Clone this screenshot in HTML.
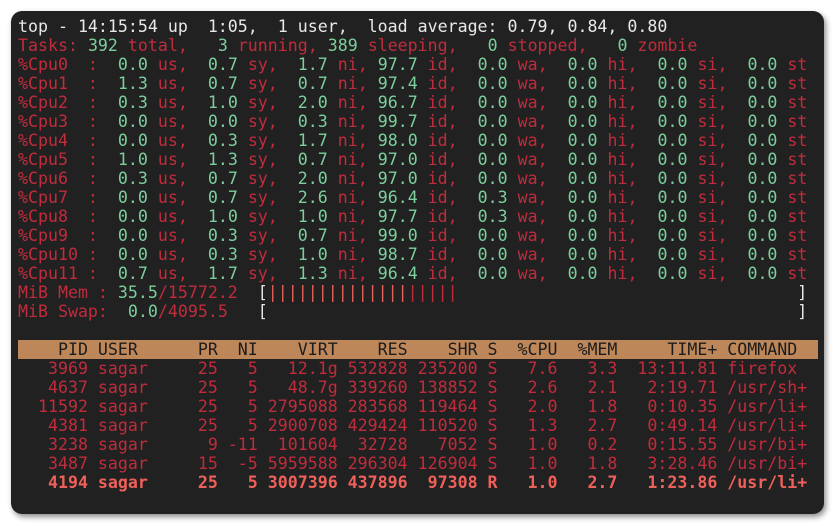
<!DOCTYPE html>
<html><head><meta charset="utf-8"><style>
html,body{margin:0;padding:0;background:#fff;width:837px;height:527px;overflow:hidden}
.win{position:absolute;left:11px;top:11px;width:813px;height:503px;background:#212121;border-radius:11px;box-shadow:2px 3px 6px rgba(0,0,0,.45)}
pre{position:absolute;left:18px;top:17px;margin:0;font-family:"DejaVu Sans Mono","Liberation Mono",monospace;font-size:16.6px;line-height:19px;color:#c02c3c;white-space:pre}
.w{color:#e8e8e8}.g{color:#7ccf9c}
.p{color:#e8605a}.d{color:#c02c3c}
.hd{background:#bd875a;color:#1c1c1c;display:inline-block;width:800px}
.bold{font-weight:bold;color:#f0605a}
</style></head><body><div class="win"></div><pre><span class="w">top - 14:15:54 up  1:05,  1 user,  load average: 0.79, 0.84, 0.80</span>
Tasks: <span class="g">392</span> total,   <span class="g">3</span> running, <span class="g">389</span> sleeping,   <span class="g">0</span> stopped,   <span class="g">0</span> zombie
%Cpu0  :  <span class="g">0.0</span> us,  <span class="g">0.7</span> sy,  <span class="g">1.7</span> ni, <span class="g">97.7</span> id,  <span class="g">0.0</span> wa,  <span class="g">0.0</span> hi,  <span class="g">0.0</span> si,  <span class="g">0.0</span> st
%Cpu1  :  <span class="g">1.3</span> us,  <span class="g">0.7</span> sy,  <span class="g">0.7</span> ni, <span class="g">97.4</span> id,  <span class="g">0.0</span> wa,  <span class="g">0.0</span> hi,  <span class="g">0.0</span> si,  <span class="g">0.0</span> st
%Cpu2  :  <span class="g">0.3</span> us,  <span class="g">1.0</span> sy,  <span class="g">2.0</span> ni, <span class="g">96.7</span> id,  <span class="g">0.0</span> wa,  <span class="g">0.0</span> hi,  <span class="g">0.0</span> si,  <span class="g">0.0</span> st
%Cpu3  :  <span class="g">0.0</span> us,  <span class="g">0.0</span> sy,  <span class="g">0.3</span> ni, <span class="g">99.7</span> id,  <span class="g">0.0</span> wa,  <span class="g">0.0</span> hi,  <span class="g">0.0</span> si,  <span class="g">0.0</span> st
%Cpu4  :  <span class="g">0.0</span> us,  <span class="g">0.3</span> sy,  <span class="g">1.7</span> ni, <span class="g">98.0</span> id,  <span class="g">0.0</span> wa,  <span class="g">0.0</span> hi,  <span class="g">0.0</span> si,  <span class="g">0.0</span> st
%Cpu5  :  <span class="g">1.0</span> us,  <span class="g">1.3</span> sy,  <span class="g">0.7</span> ni, <span class="g">97.0</span> id,  <span class="g">0.0</span> wa,  <span class="g">0.0</span> hi,  <span class="g">0.0</span> si,  <span class="g">0.0</span> st
%Cpu6  :  <span class="g">0.3</span> us,  <span class="g">0.7</span> sy,  <span class="g">2.0</span> ni, <span class="g">97.0</span> id,  <span class="g">0.0</span> wa,  <span class="g">0.0</span> hi,  <span class="g">0.0</span> si,  <span class="g">0.0</span> st
%Cpu7  :  <span class="g">0.0</span> us,  <span class="g">0.7</span> sy,  <span class="g">2.6</span> ni, <span class="g">96.4</span> id,  <span class="g">0.3</span> wa,  <span class="g">0.0</span> hi,  <span class="g">0.0</span> si,  <span class="g">0.0</span> st
%Cpu8  :  <span class="g">0.0</span> us,  <span class="g">1.0</span> sy,  <span class="g">1.0</span> ni, <span class="g">97.7</span> id,  <span class="g">0.3</span> wa,  <span class="g">0.0</span> hi,  <span class="g">0.0</span> si,  <span class="g">0.0</span> st
%Cpu9  :  <span class="g">0.0</span> us,  <span class="g">0.3</span> sy,  <span class="g">0.7</span> ni, <span class="g">99.0</span> id,  <span class="g">0.0</span> wa,  <span class="g">0.0</span> hi,  <span class="g">0.0</span> si,  <span class="g">0.0</span> st
%Cpu10 :  <span class="g">0.0</span> us,  <span class="g">0.3</span> sy,  <span class="g">1.0</span> ni, <span class="g">98.7</span> id,  <span class="g">0.0</span> wa,  <span class="g">0.0</span> hi,  <span class="g">0.0</span> si,  <span class="g">0.0</span> st
%Cpu11 :  <span class="g">0.7</span> us,  <span class="g">1.7</span> sy,  <span class="g">1.3</span> ni, <span class="g">96.4</span> id,  <span class="g">0.0</span> wa,  <span class="g">0.0</span> hi,  <span class="g">0.0</span> si,  <span class="g">0.0</span> st
MiB Mem : <span class="g">35.5</span>/15772.2  <span class="w">[</span><span class="p">||||||||||||||</span><span class="d">|||||</span>                                  <span class="w">]</span>
MiB Swap:  <span class="g">0.0</span>/4095.5   <span class="w">[</span>                                                     <span class="w">]</span>

<span class="hd">    PID USER      PR  NI    VIRT    RES    SHR S  %CPU  %MEM     TIME+ COMMAND  </span>
   3969 sagar     25   5   12.1g 532828 235200 S   7.6   3.3  13:11.81 firefox
   4637 sagar     25   5   48.7g 339260 138852 S   2.6   2.1   2:19.71 /usr/sh+
  11592 sagar     25   5 2795088 283568 119464 S   2.0   1.8   0:10.35 /usr/li+
   4381 sagar     25   5 2900708 429424 110520 S   1.3   2.7   0:49.14 /usr/li+
   3238 sagar      9 -11  101604  32728   7052 S   1.0   0.2   0:15.55 /usr/bi+
   3487 sagar     15  -5 5959588 296304 126904 S   1.0   1.8   3:28.46 /usr/bi+
<span class="bold">   4194 sagar     25   5 3007396 437896  97308 R   1.0   2.7   1:23.86 /usr/li+</span></pre></body></html>
